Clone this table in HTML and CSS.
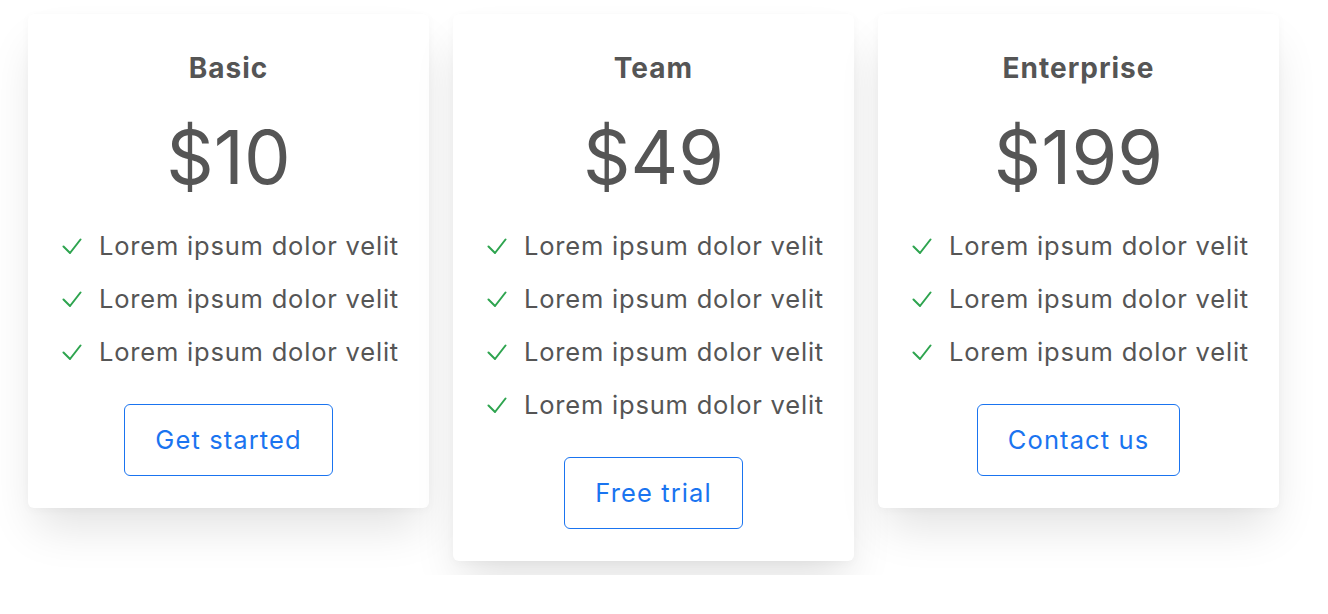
FILE: index.html
```html
<!DOCTYPE html>
<html lang="en">
<head>
<meta charset="utf-8">
<title>Pricing</title>
<link rel="stylesheet" href="styles.css">
</head>
<body>
<div class="pricing">
  <div class="card">
    <h2 class="plan">Basic</h2>
    <div class="price">$10</div>
    <ul class="features">
      <li><svg class="check" viewBox="0 0 20 16"><polyline points="1.5,8.5 8,15 18.5,1.5"/></svg>Lorem ipsum dolor velit</li>
      <li><svg class="check" viewBox="0 0 20 16"><polyline points="1.5,8.5 8,15 18.5,1.5"/></svg>Lorem ipsum dolor velit</li>
      <li><svg class="check" viewBox="0 0 20 16"><polyline points="1.5,8.5 8,15 18.5,1.5"/></svg>Lorem ipsum dolor velit</li>
    </ul>
    <button class="btn">Get started</button>
  </div>
  <div class="card">
    <h2 class="plan">Team</h2>
    <div class="price">$49</div>
    <ul class="features">
      <li><svg class="check" viewBox="0 0 20 16"><polyline points="1.5,8.5 8,15 18.5,1.5"/></svg>Lorem ipsum dolor velit</li>
      <li><svg class="check" viewBox="0 0 20 16"><polyline points="1.5,8.5 8,15 18.5,1.5"/></svg>Lorem ipsum dolor velit</li>
      <li><svg class="check" viewBox="0 0 20 16"><polyline points="1.5,8.5 8,15 18.5,1.5"/></svg>Lorem ipsum dolor velit</li>
      <li><svg class="check" viewBox="0 0 20 16"><polyline points="1.5,8.5 8,15 18.5,1.5"/></svg>Lorem ipsum dolor velit</li>
    </ul>
    <button class="btn">Free trial</button>
  </div>
  <div class="card">
    <h2 class="plan">Enterprise</h2>
    <div class="price">$199</div>
    <ul class="features">
      <li><svg class="check" viewBox="0 0 20 16"><polyline points="1.5,8.5 8,15 18.5,1.5"/></svg>Lorem ipsum dolor velit</li>
      <li><svg class="check" viewBox="0 0 20 16"><polyline points="1.5,8.5 8,15 18.5,1.5"/></svg>Lorem ipsum dolor velit</li>
      <li><svg class="check" viewBox="0 0 20 16"><polyline points="1.5,8.5 8,15 18.5,1.5"/></svg>Lorem ipsum dolor velit</li>
    </ul>
    <button class="btn">Contact us</button>
  </div>
</div>
</body>
</html>
```
FILE: styles.css
```css
* { box-sizing: border-box; }
html, body { margin: 0; background: #fff; }
body {
  font-family: Inter, "Liberation Sans", sans-serif;
  color: #555;
}
.pricing {
  display: flex;
  align-items: flex-start;
  gap: 24px;
  padding: 14px 28px;
}
.card {
  width: 401px;
  flex: none;
  background: #fff;
  border-radius: 6px;
  box-shadow: 0 26px 44px -8px rgba(0,0,0,0.12), 0 2px 10px rgba(0,0,0,0.03);
  padding: 36px 20px 32px;
  display: flex;
  flex-direction: column;
  align-items: center;
}
.plan {
  margin: 0;
  font-size: 28px;
  line-height: 36px;
  font-weight: 700;
  letter-spacing: 1px;
  color: #555;
}
.price {
  margin-top: 28px;
  font-size: 74px;
  line-height: 87px;
  font-weight: 400;
  color: #555;
}
.features {
  list-style: none;
  margin: 27px 0 0;
  padding: 0 0 0 4px;
  display: flex;
  flex-direction: column;
  gap: 17px;
}
.features li {
  display: flex;
  align-items: center;
  font-size: 25.5px;
  letter-spacing: 0.8px;
  line-height: 36px;
}
.check {
  width: 20px;
  height: 16px;
  margin-right: 17px;
  flex: none;
  fill: none;
  stroke: #2ea44f;
  stroke-width: 2;
  stroke-linecap: round;
  stroke-linejoin: round;
}
.btn {
  margin-top: 34px;
  font-family: inherit;
  font-size: 25.5px;
  letter-spacing: 1.1px;
  line-height: 36px;
  color: #1a74f0;
  background: #fff;
  border: 1.5px solid #1a74f0;
  border-radius: 6px;
  padding: 17px 30px;
  cursor: pointer;
}
```
